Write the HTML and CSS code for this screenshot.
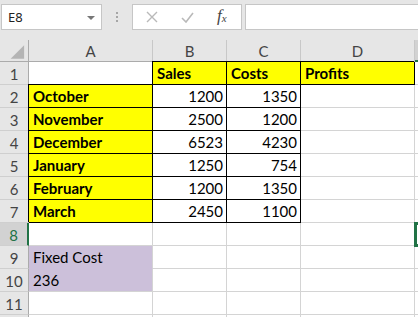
FILE: index.html
```html
<!DOCTYPE html>
<html lang="en">
<head>
    <meta charset="UTF-8">
    <title>Sheet</title>
    <link rel="stylesheet" href="styles.css">
</head>
<body>
    <div class="toolbar">
        <div class="namebox">
            <span>E8</span>
            <svg class="arrow" width="8" height="4" viewBox="0 0 8 4"><polygon points="0,0 8,0 4,4" fill="#777"/></svg>
        </div>
        <div class="grip">
            <i></i><i></i><i></i>
        </div>
        <div class="fxbox">
            <svg width="12" height="12" viewBox="0 0 12 12"><path d="M1 1 L11 11 M11 1 L1 11" stroke="#b9b9b9" stroke-width="1.4" fill="none"/></svg>
            <svg width="13" height="11" viewBox="0 0 13 11"><path d="M1 6 L5 10 L12 1" stroke="#b9b9b9" stroke-width="1.6" fill="none"/></svg>
            <span class="fx">f<sub>x</sub></span>
        </div>
        <div class="formula"></div>
    </div>

    <div class="sheet">
        <div class="hd corner">
            <svg width="29" height="21" viewBox="0 0 29 21"><polygon points="25,5 25,19 11,19" fill="#b4b4b4"/></svg>
        </div>
        <div class="hd col">A</div>
        <div class="hd col">B</div>
        <div class="hd col">C</div>
        <div class="hd col">D</div>
        <div class="hd col sel-col"></div>

        <div class="hd row">1</div>
        <div class="c"></div>
        <div class="c box yellow bold">Sales</div>
        <div class="c box yellow bold">Costs</div>
        <div class="c box yellow bold">Profits</div>
        <div class="c"></div>

        <div class="hd row">2</div>
        <div class="c box yellow bold">October</div>
        <div class="c box num">1200</div>
        <div class="c box num">1350</div>
        <div class="c"></div>
        <div class="c"></div>

        <div class="hd row">3</div>
        <div class="c box yellow bold">November</div>
        <div class="c box num">2500</div>
        <div class="c box num">1200</div>
        <div class="c"></div>
        <div class="c"></div>

        <div class="hd row">4</div>
        <div class="c box yellow bold">December</div>
        <div class="c box num">6523</div>
        <div class="c box num">4230</div>
        <div class="c"></div>
        <div class="c"></div>

        <div class="hd row">5</div>
        <div class="c box yellow bold">January</div>
        <div class="c box num">1250</div>
        <div class="c box num">754</div>
        <div class="c"></div>
        <div class="c"></div>

        <div class="hd row">6</div>
        <div class="c box yellow bold">February</div>
        <div class="c box num">1200</div>
        <div class="c box num">1350</div>
        <div class="c"></div>
        <div class="c"></div>

        <div class="hd row">7</div>
        <div class="c box yellow bold">March</div>
        <div class="c box num">2450</div>
        <div class="c box num">1100</div>
        <div class="c"></div>
        <div class="c"></div>

        <div class="hd row sel-row">8</div>
        <div class="c"></div>
        <div class="c"></div>
        <div class="c"></div>
        <div class="c"></div>
        <div class="c active"></div>

        <div class="hd row">9</div>
        <div class="c purple top">Fixed Cost</div>
        <div class="c"></div>
        <div class="c"></div>
        <div class="c"></div>
        <div class="c"></div>

        <div class="hd row">10</div>
        <div class="c purple">236</div>
        <div class="c"></div>
        <div class="c"></div>
        <div class="c"></div>
        <div class="c"></div>

        <div class="hd row">11</div>
        <div class="c"></div>
        <div class="c"></div>
        <div class="c"></div>
        <div class="c"></div>
        <div class="c"></div>

        <div class="hd row"></div>
        <div class="c"></div>
        <div class="c"></div>
        <div class="c"></div>
        <div class="c"></div>
        <div class="c"></div>
    </div>
</body>
</html>
```

FILE: styles.css
```css
body {
    margin: 0;
    background-color: #e6e6e6;
    overflow: hidden;
}
.toolbar {
    display: flex;
    align-items: flex-start;
    height: 40px;
    padding-top: 4px;
    box-sizing: border-box;
    font-family: "Noto Sans", sans-serif;
}
.namebox {
    margin-left: 1px;
    width: 101px;
    height: 26px;
    box-sizing: border-box;
    background-color: white;
    border: 1px solid #c6c6c6;
    display: flex;
    align-items: center;
    justify-content: space-between;
    padding: 0 6px 0 6px;
    font-size: 13px;
    color: #222;
}
.namebox .arrow {
    margin-top: 1px;
}
.grip {
    width: 30px;
    height: 26px;
    display: flex;
    flex-direction: column;
    align-items: center;
    justify-content: center;
    gap: 2px;
}
.grip i {
    width: 2px;
    height: 2px;
    background-color: #a6a6a6;
}
.fxbox {
    width: 110px;
    height: 26px;
    box-sizing: border-box;
    background-color: white;
    border: 1px solid #c6c6c6;
    display: flex;
    align-items: center;
    padding-left: 13px;
    gap: 23px;
}
.fx {
    font-family: "Liberation Serif", serif;
    font-style: italic;
    font-size: 17px;
    color: #444;
    margin-top: -3px;
}
.fx sub {
    font-size: 11px;
    vertical-align: -1px;
}
.formula {
    flex: 1;
    margin-left: 3px;
    height: 26px;
    box-sizing: border-box;
    background-color: white;
    border: 1px solid #c6c6c6;
    border-right: none;
}
.sheet {
    display: grid;
    grid-template-columns: 29px 124px 74px 74px 114px 1fr;
    grid-template-rows: 22px;
    grid-auto-rows: 23px;
    font-family: Lato, "Liberation Sans", sans-serif;
    font-size: 15px;
    color: #000;
}
.hd {
    background-color: #e6e6e6;
    box-sizing: border-box;
    color: #444;
    display: flex;
    align-items: center;
    justify-content: center;
}
.hd.col {
    border-right: 1px solid #c8c8c8;
    border-bottom: 1px solid #ababab;
    padding-top: 1px;
}
.hd.corner {
    border-right: 1px solid #ababab;
    border-bottom: 1px solid #ababab;
}
.hd.row {
    border-right: 1px solid #ababab;
    border-bottom: 1px solid #cfcfcf;
    padding-top: 1px;
}
.hd.sel-col {
    background-color: #d2d2d2;
    border-bottom: 2px solid #217346;
}
.hd.sel-row {
    background-color: #d2d2d2;
    color: #217346;
    border-right: 2px solid #217346;
}
.c {
    background-color: white;
    box-sizing: border-box;
    border-right: 1px solid #d4d4d4;
    border-bottom: 1px solid #d4d4d4;
    display: flex;
    align-items: flex-end;
    padding: 0 4px 2px 4px;
    white-space: nowrap;
}
.c.box {
    border-right-color: #000;
    border-bottom-color: #000;
    box-shadow: -1px -1px 0 #000;
}
.yellow {
    background-color: #ffff00;
}
.bold {
    font-weight: bold;
}
.num {
    justify-content: flex-end;
    padding-right: 3px;
}
.purple {
    background-color: #ccc0da;
}
.purple.top {
    border-bottom-color: #ccc0da;
}
.active {
    position: relative;
}
.active::after {
    content: "";
    position: absolute;
    left: -1px;
    top: -1px;
    width: 20px;
    height: 25px;
    box-sizing: border-box;
    border: 3px solid #217346;
    border-right: none;
}
```
